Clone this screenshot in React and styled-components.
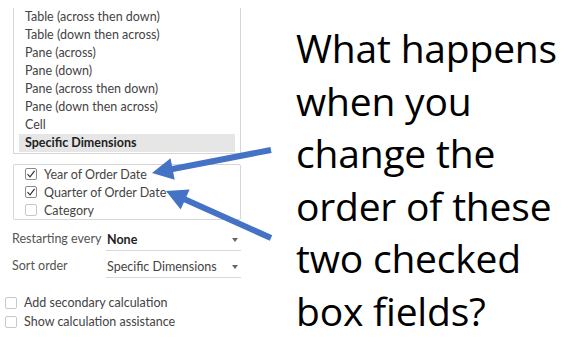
import React from 'react';
import styled, { createGlobalStyle } from 'styled-components';

const GlobalStyle = createGlobalStyle`
  html, body {
    margin: 0;
    padding: 0;
    background: #fff;
  }
  body {
    width: 577px;
    height: 360px;
    overflow: hidden;
  }
`;

const Page = styled.div`
  position: relative;
  width: 577px;
  height: 360px;
  display: flex;
  background: #fff;
`;

const Panel = styled.div`
  width: 245px;
  padding: 8px 0 0 5px;
  box-sizing: border-box;
  font-family: 'Lato', 'Noto Sans', sans-serif;
  font-size: 12.5px;
  color: #333;
`;

const ListBox = styled.div`
  margin-left: 8px;
  width: 228px;
  box-sizing: border-box;
  border: 1px solid #d6d6d6;
  border-top: none;
  padding: 0 5px 1px;
`;

const ListItem = styled.div`
  height: 18px;
  line-height: 18px;
  padding-left: 6px;
  font-weight: ${p => (p.selected ? 700 : 400)};
  background: ${p => (p.selected ? '#e6e6e6' : 'transparent')};
  color: ${p => (p.selected ? '#222' : '#444')};
`;

const CheckGroup = styled.div`
  margin: 10px 0 0 8px;
  width: 228px;
  box-sizing: border-box;
  border: 1px solid #d6d6d6;
  border-radius: 2px;
  padding: 0 0 0 11px;
`;

const CheckRow = styled.div`
  display: flex;
  align-items: center;
  gap: 7px;
  height: ${p => p.h || 18}px;
  color: #444;
`;

const Box = styled.span`
  width: 12px;
  height: 12px;
  box-sizing: border-box;
  border: 1px solid ${p => (p.checked ? '#8a8a8a' : '#c8c8c8')};
  border-radius: 2px;
  display: flex;
  align-items: center;
  justify-content: center;
  flex: none;
`;

const Fields = styled.div`
  margin-top: 5px;
`;

const FieldRow = styled.div`
  display: flex;
  align-items: center;
  padding-left: 7px;
  height: 27px;
  color: #555;
`;

const FieldLabel = styled.div`
  width: 94px;
`;

const Select = styled.div`
  width: 135px;
  height: 22px;
  box-sizing: border-box;
  display: flex;
  align-items: center;
  justify-content: space-between;
  padding: 0 3px 0 1px;
  border-bottom: 1px solid #d9d9d9;
  font-weight: ${p => (p.bold ? 700 : 400)};
  color: ${p => (p.bold ? '#222' : '#444')};
  margin-top: 3px;
`;

const Caret = styled.span`
  width: 0;
  height: 0;
  border-left: 3px solid transparent;
  border-right: 3px solid transparent;
  border-top: 4px solid #666;
`;

const Options = styled.div`
  margin-top: 14px;
`;

const Question = styled.div`
  padding: 22px 0 0 51px;
  font-family: 'Open Sans', 'Noto Sans', sans-serif;
  font-size: 39px;
  line-height: 52.5px;
  color: #000;
  letter-spacing: -0.2px;
  white-space: nowrap;
`;

const Overlay = styled.svg`
  position: absolute;
  left: 0;
  top: 0;
  pointer-events: none;
`;

const Check = () => (
  <svg width="10" height="10" viewBox="0 0 10 10">
    <path d="M1.5 5.2 L4 7.8 L8.6 1.8" fill="none" stroke="#333" strokeWidth="1.2" />
  </svg>
);

const arrowPoints = (tx, ty, hx, hy, shaft = 3, headLen = 21, headW = 11) => {
  const dx = hx - tx;
  const dy = hy - ty;
  const len = Math.hypot(dx, dy);
  const ux = dx / len;
  const uy = dy / len;
  const nx = -uy;
  const ny = ux;
  const bx = hx - ux * headLen;
  const by = hy - uy * headLen;
  const pts = [
    [tx + nx * shaft, ty + ny * shaft],
    [bx + nx * shaft, by + ny * shaft],
    [bx + nx * headW, by + ny * headW],
    [hx, hy],
    [bx - nx * headW, by - ny * headW],
    [bx - nx * shaft, by - ny * shaft],
    [tx - nx * shaft, ty - ny * shaft],
  ];
  return pts.map(p => p.join(',')).join(' ');
};

const items = [
  'Table (across then down)',
  'Table (down then across)',
  'Pane (across)',
  'Pane (down)',
  'Pane (across then down)',
  'Pane (down then across)',
  'Cell',
];

const App = () => (
  <Page>
    <GlobalStyle />
    <Panel>
      <ListBox>
        {items.map(t => (
          <ListItem key={t}>{t}</ListItem>
        ))}
        <ListItem selected>Specific Dimensions</ListItem>
      </ListBox>
      <CheckGroup>
        <CheckRow>
          <Box checked><Check /></Box>Year of Order Date
        </CheckRow>
        <CheckRow>
          <Box checked><Check /></Box>Quarter of Order Date
        </CheckRow>
        <CheckRow>
          <Box />Category
        </CheckRow>
      </CheckGroup>
      <Fields>
        <FieldRow>
          <FieldLabel>Restarting every</FieldLabel>
          <Select bold>None<Caret /></Select>
        </FieldRow>
        <FieldRow>
          <FieldLabel>Sort order</FieldLabel>
          <Select>Specific Dimensions<Caret /></Select>
        </FieldRow>
      </Fields>
      <Options>
        <CheckRow h={19}>
          <Box />Add secondary calculation
        </CheckRow>
        <CheckRow h={19}>
          <Box />Show calculation assistance
        </CheckRow>
      </Options>
    </Panel>
    <Question>
      What happens<br />
      when you<br />
      change the<br />
      order of these<br />
      two checked<br />
      box fields?
    </Question>
    <Overlay width="577" height="360">
      <polygon points={arrowPoints(271, 150, 152, 173)} fill="#4472c4" />
      <polygon points={arrowPoints(271, 238, 166, 191)} fill="#4472c4" />
    </Overlay>
  </Page>
);

export default App;
